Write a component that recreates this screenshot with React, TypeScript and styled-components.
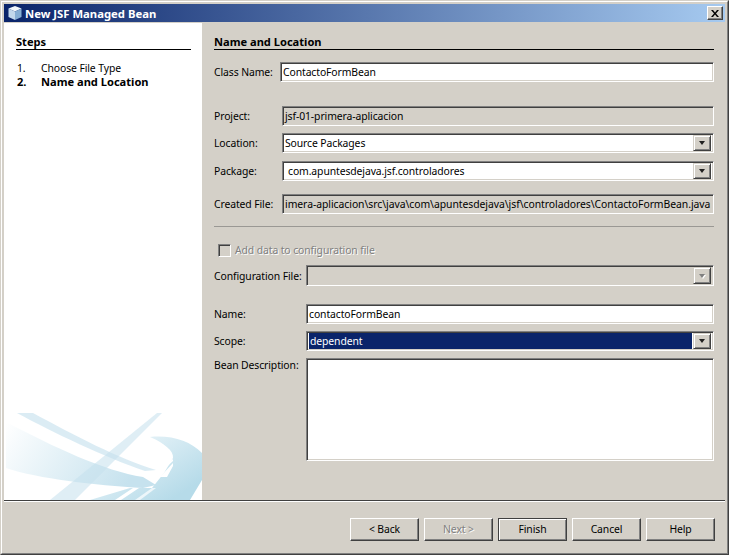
import React from "react";
import styled, { createGlobalStyle } from "styled-components";

const GlobalStyle = createGlobalStyle`
  html, body {
    margin: 0;
    padding: 0;
    background: #d4d0c8;
  }
  * {
    box-sizing: border-box;
  }
`;

const Window = styled.div`
  width: 729px;
  height: 555px;
  border: 1px solid;
  border-color: #d4d0c8 #404040 #404040 #d4d0c8;
  background: #d4d0c8;
  font-family: "Noto Sans", Tahoma, sans-serif;
  font-size: 10.4px;
  letter-spacing: -0.1px;
  color: #000;
`;

const Inner = styled.div`
  height: 100%;
  border: 1px solid;
  border-color: #fff #808080 #808080 #fff;
  padding: 2px;
  display: flex;
  flex-direction: column;
`;

const TitleBar = styled.div`
  height: 18px;
  margin-bottom: 1px;
  flex: none;
  padding: 0 2px 0 3px;
  display: flex;
  align-items: center;
  gap: 2px;
  background: linear-gradient(to right, #0a246a, #a6caf0);
  color: #fff;
  font-weight: 700;
  font-size: 11.3px;
  letter-spacing: 0;
`;

const TitleText = styled.span`
  flex: 1;
`;

const CloseButton = styled.div`
  width: 16px;
  height: 14px;
  background: #d4d0c8;
  border: 1px solid;
  border-color: #fff #404040 #404040 #fff;
  box-shadow: inset -1px -1px 0 #808080;
  display: flex;
  align-items: center;
  justify-content: center;
`;

const Body = styled.div`
  flex: 1;
  display: flex;
  min-height: 0;
`;

const StepsPanel = styled.div`
  width: 198px;
  flex: none;
  background: #fff;
  display: flex;
  flex-direction: column;
  justify-content: space-between;
`;

const StepsContent = styled.div`
  padding: 12px 11px 0 12px;
`;

const Heading = styled.div`
  height: 14px;
  line-height: 13px;
  font-weight: 700;
  font-size: 11.1px;
  letter-spacing: 0;
  border-bottom: 1px solid #000;
  box-sizing: content-box;
`;

const StepList = styled.div`
  margin-top: 11px;
`;

const Step = styled.div<{ $current?: boolean }>`
  display: flex;
  height: 14px;
  line-height: 14px;
  font-weight: ${(p) => (p.$current ? 700 : 400)};
  font-size: ${(p) => (p.$current ? "11.1px" : "inherit")};
  letter-spacing: ${(p) => (p.$current ? "0" : "inherit")};
`;

const StepNumber = styled.span`
  width: 25px;
  padding-left: 1px;
`;

const Decoration = styled.svg`
  display: block;
  flex: none;
`;

const MainPanel = styled.div`
  flex: 1;
  min-width: 0;
  padding: 12px 11px 0 12px;
  display: flex;
  flex-direction: column;
`;

const Row = styled.div<{ $mt: number }>`
  display: flex;
  align-items: center;
  margin-top: ${(p) => p.$mt}px;
`;

const TopRow = styled(Row)`
  align-items: flex-start;
`;

const Label = styled.span<{ $w: number }>`
  width: ${(p) => p.$w}px;
  flex: none;
  line-height: 14px;
  white-space: nowrap;
`;

const Field = styled.div<{ $h?: number; $readOnly?: boolean }>`
  flex: 1;
  min-width: 0;
  height: ${(p) => p.$h ?? 20}px;
  border: 1px solid;
  border-color: #808080 #fff #fff #808080;
  box-shadow: inset 1px 1px 0 #404040, inset -1px -1px 0 #d4d0c8;
  background: ${(p) => (p.$readOnly ? "#d4d0c8" : "#fff")};
  padding: 1px 2px 1px 2px;
  display: flex;
  align-items: ${(p) => (p.$h && p.$h > 30 ? "flex-start" : "center")};
  white-space: nowrap;
  overflow: hidden;
`;

const PathText = styled.span`
  letter-spacing: -0.05px;
`;

const ComboText = styled.div<{ $selected?: boolean; $pad?: number }>`
  flex: 1;
  align-self: stretch;
  display: flex;
  align-items: center;
  padding-left: ${(p) => p.$pad ?? 1}px;
  background: ${(p) => (p.$selected ? "#0a246a" : "transparent")};
  color: ${(p) => (p.$selected ? "#fff" : "inherit")};
`;

const ArrowButton = styled.div`
  width: 18px;
  flex: none;
  align-self: stretch;
  margin-left: 1px;
  background: #d4d0c8;
  border: 1px solid;
  border-color: #d4d0c8 #404040 #404040 #d4d0c8;
  box-shadow: inset 1px 1px 0 #fff, inset -1px -1px 0 #808080;
  display: flex;
  align-items: center;
  justify-content: center;
`;

const Caret = styled.span<{ $disabled?: boolean }>`
  width: 0;
  height: 0;
  border-left: 3.5px solid transparent;
  border-right: 3.5px solid transparent;
  border-top: 4px solid ${(p) => (p.$disabled ? "#808080" : "#202020")};
  filter: ${(p) => (p.$disabled ? "drop-shadow(1px 1px 0 #fff)" : "none")};
`;

const Separator = styled.div`
  height: 1px;
  margin-top: 12px;
  background: #9a9894;
`;

const CheckRow = styled(Row)`
  height: 14px;
  padding-left: 4px;
  gap: 4px;
`;

const CheckBox = styled.span`
  width: 13px;
  height: 13px;
  border: 1px solid;
  border-color: #808080 #fff #fff #808080;
  box-shadow: inset 1px 1px 0 #404040, inset -1px -1px 0 #d4d0c8;
`;

const DisabledText = styled.span`
  color: #808080;
  text-shadow: 1px 1px 0 #fff;
`;

const Footer = styled.div`
  height: 51px;
  flex: none;
  border-top: 1px solid #404040;
  box-shadow: inset 0 1px 0 #fff;
  padding: 17px 10px 0 0;
  display: flex;
  justify-content: flex-end;
  gap: 5px;
`;

const Button = styled.div<{ $default?: boolean }>`
  width: 69px;
  height: 23px;
  padding-bottom: 1px;
  background: #d4d0c8;
  border: 1px solid;
  border-color: ${(p) =>
    p.$default ? "#404040" : "#fff #404040 #404040 #fff"};
  box-shadow: ${(p) =>
    p.$default
      ? "inset 1px 1px 0 #fff, inset -1px -1px 0 #808080"
      : "inset -1px -1px 0 #808080"};
  display: flex;
  align-items: center;
  justify-content: center;
`;

function CubeIcon() {
  return (
    <svg width="16" height="16" viewBox="0 0 16 16">
      <path d="M8 1 L14.5 3.5 L8 6.5 L1.5 3.5 Z" fill="#f0f6fb" />
      <path d="M1.5 3.5 L8 6.5 V15 L1.5 12 Z" fill="#c2d8ec" />
      <path d="M14.5 3.5 L8 6.5 V15 L14.5 12 Z" fill="#86aed4" />
    </svg>
  );
}

function CloseIcon() {
  return (
    <svg width="8" height="7" viewBox="0 0 8 7">
      <path
        d="M0 0 H2 L4 2.4 L6 0 H8 L5 3.5 L8 7 H6 L4 4.6 L2 7 H0 L3 3.5 Z"
        fill="#000"
      />
    </svg>
  );
}

function WizardArt() {
  return (
    <Decoration width="198" height="87" viewBox="0 0 198 87">
      <defs>
        <linearGradient id="wide" x1="0" y1="0" x2="1" y2="0.3">
          <stop offset="0" stopColor="#ffffff" />
          <stop offset="1" stopColor="#c6e2ee" />
        </linearGradient>
        <linearGradient id="swoosh" x1="0" y1="0" x2="0.9" y2="0.8">
          <stop offset="0" stopColor="#f7fbfd" />
          <stop offset="1" stopColor="#b6dbe9" />
        </linearGradient>
      </defs>
      <path d="M2 9 C50 34 100 58 139 64 L152 72 L139 75 C90 72 35 66 2 55 Z" fill="url(#wide)" />
      <path d="M13 0 H29 C70 22 115 46 152 57 L141 58 C100 44 50 20 13 0 Z" fill="#cfe6f0" opacity="0.75" />
      <path d="M153 0 H158 L71 87 H46 Z" fill="#c4e0ec" opacity="0.55" />
      <path
        d="M146 24 C168 22 186 28 198 40 V67 L186 87 H86 L126 75 H148 L160 60 L169 45 C170 38 160 30 146 24 Z"
        fill="url(#swoosh)"
      />
      <path d="M146 64 L169 46 V48 L152 64 Z" fill="#fff" />
      <path d="M156 64 L169 50 V53 L163 64 Z" fill="#fff" />
      <path d="M111 87 L129 75 H135 L117 87 Z" fill="#fff" />
      <path d="M131 87 L148 75 H152 L136 87 Z" fill="#fff" opacity="0.7" />
    </Decoration>
  );
}

export default function App() {
  return (
    <Window>
      <GlobalStyle />
      <Inner>
        <TitleBar>
          <CubeIcon />
          <TitleText>New JSF Managed Bean</TitleText>
          <CloseButton>
            <CloseIcon />
          </CloseButton>
        </TitleBar>
        <Body>
          <StepsPanel>
            <StepsContent>
              <Heading>Steps</Heading>
              <StepList>
                <Step>
                  <StepNumber>1.</StepNumber>
                  Choose File Type
                </Step>
                <Step $current>
                  <StepNumber>2.</StepNumber>
                  Name and Location
                </Step>
              </StepList>
            </StepsContent>
            <WizardArt />
          </StepsPanel>
          <MainPanel>
            <Heading>Name and Location</Heading>
            <Row $mt={12}>
              <Label $w={66}>Class Name:</Label>
              <Field>ContactoFormBean</Field>
            </Row>
            <Row $mt={24}>
              <Label $w={68}>Project:</Label>
              <Field $readOnly>jsf-01-primera-aplicacion</Field>
            </Row>
            <Row $mt={7}>
              <Label $w={68}>Location:</Label>
              <Field>
                <ComboText $pad={0}>Source Packages</ComboText>
                <ArrowButton>
                  <Caret />
                </ArrowButton>
              </Field>
            </Row>
            <Row $mt={8}>
              <Label $w={68}>Package:</Label>
              <Field>
                <ComboText $pad={3}>com.apuntesdejava.jsf.controladores</ComboText>
                <ArrowButton>
                  <Caret />
                </ArrowButton>
              </Field>
            </Row>
            <Row $mt={13}>
              <Label $w={68}>Created File:</Label>
              <Field $readOnly>
                <PathText>
                  imera-aplicacion\src\java\com\apuntesdejava\jsf\controladores\ContactoFormBean.java
                </PathText>
              </Field>
            </Row>
            <Separator />
            <CheckRow $mt={16}>
              <CheckBox />
              <DisabledText>Add data to configuration file</DisabledText>
            </CheckRow>
            <Row $mt={8}>
              <Label $w={92}>Configuration File:</Label>
              <Field $h={21} $readOnly>
                <ComboText />
                <ArrowButton>
                  <Caret $disabled />
                </ArrowButton>
              </Field>
            </Row>
            <Row $mt={18}>
              <Label $w={92}>Name:</Label>
              <Field>contactoFormBean</Field>
            </Row>
            <Row $mt={7}>
              <Label $w={92}>Scope:</Label>
              <Field>
                <ComboText $selected>dependent</ComboText>
                <ArrowButton>
                  <Caret />
                </ArrowButton>
              </Field>
            </Row>
            <TopRow $mt={7}>
              <Label $w={92}>Bean Description:</Label>
              <Field $h={103} />
            </TopRow>
          </MainPanel>
        </Body>
        <Footer>
          <Button>&lt; Back</Button>
          <Button>
            <DisabledText>Next &gt;</DisabledText>
          </Button>
          <Button $default>Finish</Button>
          <Button>Cancel</Button>
          <Button>Help</Button>
        </Footer>
      </Inner>
    </Window>
  );
}
